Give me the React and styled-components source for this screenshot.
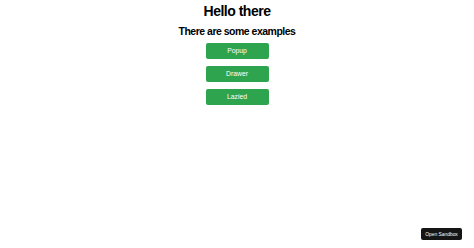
import React from 'react'
import styled, { createGlobalStyle } from 'styled-components'

const GlobalStyle = createGlobalStyle`
    html, body {
        margin: 0;
        padding: 0;
        background: #ffffff;
        font-family: "Liberation Sans", Arial, sans-serif;
    }
`

const Page = styled.div`
    width: 474px;
    height: 248px;
    position: relative;
    display: flex;
    flex-direction: column;
    align-items: center;
    padding-top: 3px;
    box-sizing: border-box;
`

const Title = styled.h1`
    margin: 0;
    font-size: 14px;
    line-height: 16px;
    letter-spacing: -0.5px;
    font-weight: bold;
    color: #000;
`

const Subtitle = styled.h2`
    margin: 5.8px 0 5.8px;
    font-size: 10.5px;
    line-height: 12px;
    letter-spacing: -0.5px;
    font-weight: bold;
    color: #000;
`

const ButtonList = styled.div`
    display: flex;
    flex-direction: column;
    gap: 7px;
`

const Button = styled.button`
    width: 63px;
    height: 16px;
    padding: 0;
    border: none;
    border-radius: 2px;
    background-color: #2ea44f;
    color: #ffffff;
    font-family: "Liberation Sans", Arial, sans-serif;
    font-size: 6.8px;
    cursor: pointer;
`

const SandboxButton = styled.a`
    position: absolute;
    right: 12px;
    bottom: 8px;
    width: 41px;
    height: 12px;
    display: flex;
    align-items: center;
    justify-content: center;
    background: #151515;
    color: #ffffff;
    border-radius: 2px;
    font-size: 4.9px;
    text-decoration: none;
`

export default function App() {
    return (
        <>
            <GlobalStyle />
            <Page>
                <Title>Hello there</Title>
                <Subtitle>There are some examples</Subtitle>
                <ButtonList>
                    <Button>Popup</Button>
                    <Button>Drawer</Button>
                    <Button>Lazied</Button>
                </ButtonList>
                <SandboxButton href="#">Open Sandbox</SandboxButton>
            </Page>
        </>
    )
}
